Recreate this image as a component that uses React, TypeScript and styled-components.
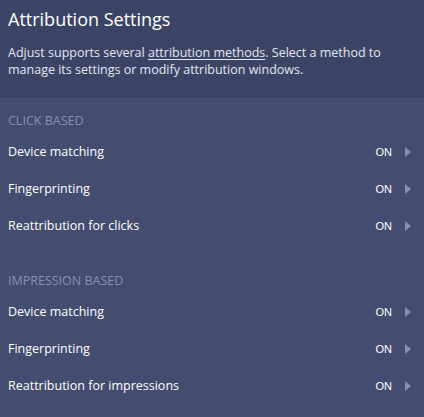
import React from "react";
import styled, { createGlobalStyle } from "styled-components";

const GlobalStyle = createGlobalStyle`
  html, body {
    margin: 0;
    padding: 0;
    background: #444c6f;
  }
  body {
    font-family: "Open Sans", "DejaVu Sans", sans-serif;
    -webkit-font-smoothing: antialiased;
  }
`;

const sections = [
  {
    title: "CLICK BASED",
    rows: ["Device matching", "Fingerprinting", "Reattribution for clicks"]
  },
  {
    title: "IMPRESSION BASED",
    rows: ["Device matching", "Fingerprinting", "Reattribution for impressions"]
  }
];

const App = () => {
  return (
    <Panel>
      <GlobalStyle />
      <Header>
        <Title>Attribution Settings</Title>
        <Description>
          Adjust supports several <LinkText>attribution methods</LinkText>. Select a method to
          manage its settings or modify attribution windows.
        </Description>
      </Header>
      <Body>
        {sections.map((section) => (
          <Section key={section.title}>
            <SectionLabel>{section.title}</SectionLabel>
            {section.rows.map((row) => (
              <Row key={row}>
                <RowLabel>{row}</RowLabel>
                <Status>ON</Status>
                <Arrow />
              </Row>
            ))}
          </Section>
        ))}
      </Body>
    </Panel>
  );
};

export default App;

const Panel = styled.div`
  width: 424px;
  height: 417px;
  background: #444c6f;
  overflow: hidden;
`;

const Header = styled.header`
  background: #3c4466;
  padding: 8px 8px 0 8px;
  height: 98px;
  box-sizing: border-box;
`;

const Title = styled.h1`
  margin: 0;
  font-size: 18px;
  font-weight: 400;
  color: #ffffff;
  line-height: 22px;
`;

const Description = styled.p`
  margin: 14px 0 0 0;
  font-size: 12.5px;
  line-height: 17px;
  color: #e4e6ee;
`;

const LinkText = styled.span`
  text-decoration: underline;
  text-underline-offset: 2px;
`;

const Body = styled.div`
  padding: 14px 0 0 0;
`;

const Section = styled.section`
  margin-bottom: 28px;
`;

const SectionLabel = styled.div`
  padding: 0 8px;
  height: 17px;
  line-height: 17px;
  font-size: 12.5px;
  color: #8a90ad;
  margin-bottom: 4px;
`;

const Row = styled.div`
  display: flex;
  align-items: center;
  height: 37px;
  padding: 0 13px 0 8px;
`;

const RowLabel = styled.span`
  flex: 1;
  font-size: 12.5px;
  color: #ffffff;
`;

const Status = styled.span`
  font-family: "Liberation Sans", Arial, sans-serif;
  font-size: 11px;
  color: #ffffff;
  margin-right: 13px;
`;

const Arrow = styled.span`
  width: 0;
  height: 0;
  border-top: 5px solid transparent;
  border-bottom: 5px solid transparent;
  border-left: 6px solid #8a90b0;
`;
